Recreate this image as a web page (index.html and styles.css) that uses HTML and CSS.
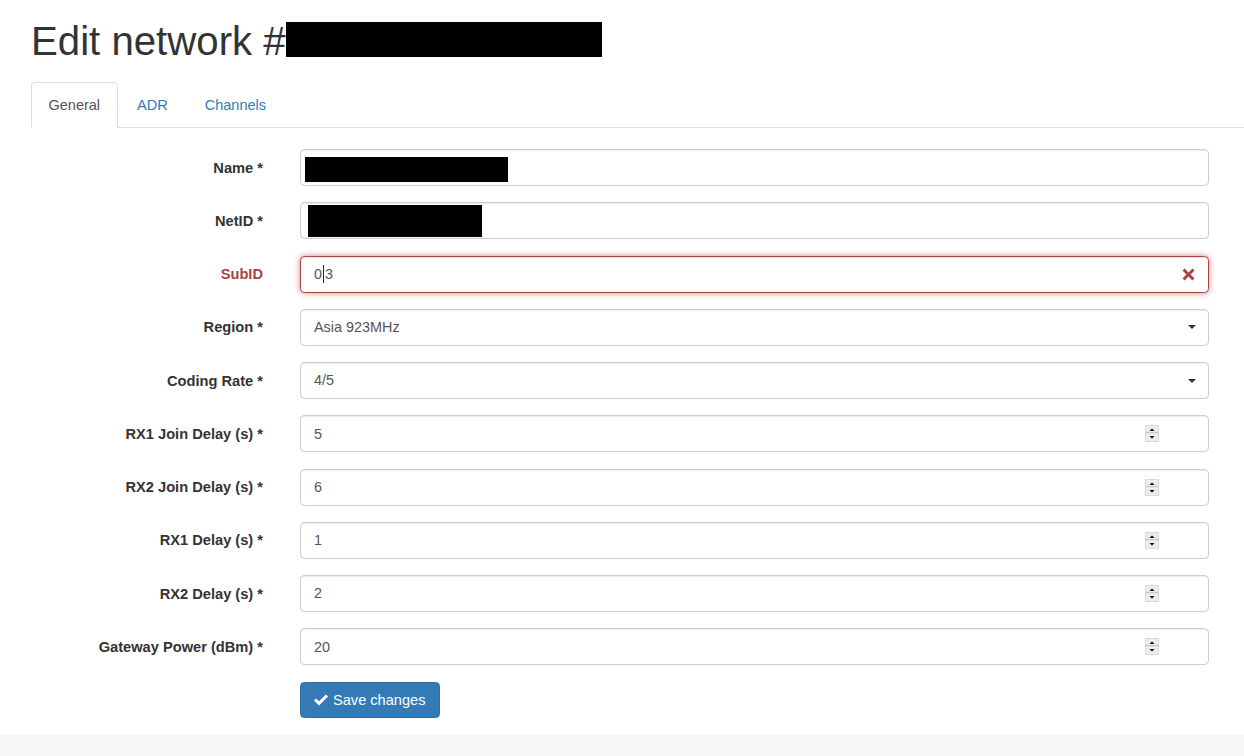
FILE: index.html
```html
<!DOCTYPE html>
<html lang="en">
<head>
<meta charset="utf-8">
<title>Edit network</title>
<link rel="stylesheet" href="styles.css">
</head>
<body>
<div class="page">
  <h1 class="title">Edit network #<span class="redact redact-title"></span></h1>

  <ul class="tabs">
    <li class="tab active"><a>General</a></li>
    <li class="tab"><a>ADR</a></li>
    <li class="tab"><a>Channels</a></li>
  </ul>

  <form class="form">
    <div class="row">
      <label class="label">Name *</label>
      <div class="control"><span class="redact redact-name"></span></div>
    </div>
    <div class="row">
      <label class="label">NetID *</label>
      <div class="control"><span class="redact redact-netid"></span></div>
    </div>
    <div class="row error">
      <label class="label">SubID</label>
      <div class="control">0<span class="cursor"></span>3
        <svg class="icon-remove" width="13" height="13" viewBox="0 0 13 13"><path d="M0.5 2.6 L2.6 0.5 L6.5 4.4 L10.4 0.5 L12.5 2.6 L8.6 6.5 L12.5 10.4 L10.4 12.5 L6.5 8.6 L2.6 12.5 L0.5 10.4 L4.4 6.5 Z" fill="#a94442"/></svg>
      </div>
    </div>
    <div class="row">
      <label class="label">Region *</label>
      <div class="control select">Asia 923MHz<span class="caret"></span></div>
    </div>
    <div class="row">
      <label class="label">Coding Rate *</label>
      <div class="control select">4/5<span class="caret"></span></div>
    </div>
    <div class="row">
      <label class="label">RX1 Join Delay (s) *</label>
      <div class="control number">5<svg class="spin" width="14" height="17" viewBox="0 0 14 17"><rect x="0.5" y="0.5" width="13" height="16" fill="#ececec" stroke="#dadada"/><line x1="1" y1="8" x2="13" y2="8" stroke="#a8a8a8"/><line x1="1" y1="9" x2="13" y2="9" stroke="#fafafa"/><path d="M4.5 6 L7 3.5 L9.5 6 Z" fill="#000"/><path d="M4.5 11 L7 13.5 L9.5 11 Z" fill="#000"/></svg></div>
    </div>
    <div class="row">
      <label class="label">RX2 Join Delay (s) *</label>
      <div class="control number">6<svg class="spin" width="14" height="17" viewBox="0 0 14 17"><rect x="0.5" y="0.5" width="13" height="16" fill="#ececec" stroke="#dadada"/><line x1="1" y1="8" x2="13" y2="8" stroke="#a8a8a8"/><line x1="1" y1="9" x2="13" y2="9" stroke="#fafafa"/><path d="M4.5 6 L7 3.5 L9.5 6 Z" fill="#000"/><path d="M4.5 11 L7 13.5 L9.5 11 Z" fill="#000"/></svg></div>
    </div>
    <div class="row">
      <label class="label">RX1 Delay (s) *</label>
      <div class="control number">1<svg class="spin" width="14" height="17" viewBox="0 0 14 17"><rect x="0.5" y="0.5" width="13" height="16" fill="#ececec" stroke="#dadada"/><line x1="1" y1="8" x2="13" y2="8" stroke="#a8a8a8"/><line x1="1" y1="9" x2="13" y2="9" stroke="#fafafa"/><path d="M4.5 6 L7 3.5 L9.5 6 Z" fill="#000"/><path d="M4.5 11 L7 13.5 L9.5 11 Z" fill="#000"/></svg></div>
    </div>
    <div class="row">
      <label class="label">RX2 Delay (s) *</label>
      <div class="control number">2<svg class="spin" width="14" height="17" viewBox="0 0 14 17"><rect x="0.5" y="0.5" width="13" height="16" fill="#ececec" stroke="#dadada"/><line x1="1" y1="8" x2="13" y2="8" stroke="#a8a8a8"/><line x1="1" y1="9" x2="13" y2="9" stroke="#fafafa"/><path d="M4.5 6 L7 3.5 L9.5 6 Z" fill="#000"/><path d="M4.5 11 L7 13.5 L9.5 11 Z" fill="#000"/></svg></div>
    </div>
    <div class="row">
      <label class="label">Gateway Power (dBm) *</label>
      <div class="control number">20<svg class="spin" width="14" height="17" viewBox="0 0 14 17"><rect x="0.5" y="0.5" width="13" height="16" fill="#ececec" stroke="#dadada"/><line x1="1" y1="8" x2="13" y2="8" stroke="#a8a8a8"/><line x1="1" y1="9" x2="13" y2="9" stroke="#fafafa"/><path d="M4.5 6 L7 3.5 L9.5 6 Z" fill="#000"/><path d="M4.5 11 L7 13.5 L9.5 11 Z" fill="#000"/></svg></div>
    </div>
    <div class="row row-actions">
      <span></span>
      <div class="actions">
        <button type="button" class="btn"><svg class="icon-ok" width="14" height="12" viewBox="0 0 14 12"><path d="M0 6.6 L2.2 4.4 L5 7.2 L11.8 0.4 L14 2.6 L5 11.6 Z" fill="#fff"/></svg>Save changes</button>
      </div>
    </div>
  </form>
</div>
<div class="footer"></div>
</body>
</html>
```

FILE: styles.css
```css
html, body {
  margin: 0;
  padding: 0;
  background: #fff;
}
body {
  font-family: "Liberation Sans", Arial, sans-serif;
  font-size: 14.6px;
  color: #333;
  line-height: 1.43;
}
.page {
  padding-left: 31px;
  padding-top: 20px;
}
.title {
  margin: 0 0 18px 0;
  font-size: 40.2px;
  font-weight: normal;
  line-height: 43.6px;
  color: #333;
  display: flex;
  align-items: center;
  height: 43.6px;
}
.redact {
  display: inline-block;
  background: #000;
}
.redact-title {
  width: 316px;
  height: 35px;
  margin-top: -4px;
}
.tabs {
  list-style: none;
  margin: 0;
  padding: 0;
  display: flex;
  border-bottom: 1px solid #ddd;
  height: 45px;
}
.tab {
  margin-right: 2px;
  margin-bottom: -1px;
}
.tab a {
  display: block;
  padding: 11px 16.5px;
  line-height: 22px;
  border: 1px solid transparent;
  border-radius: 4.4px 4.4px 0 0;
  color: #337ab7;
  font-size: 14.5px;
}
.tab.active a {
  color: #555;
  background: #fff;
  border-color: #ddd #ddd transparent #ddd;
}
.form {
  padding-top: 21.5px;
  display: flex;
  flex-direction: column;
}
.row {
  display: grid;
  grid-template-columns: 232px 909px;
  column-gap: 37px;
  align-items: center;
  margin-bottom: 16.25px;
}
.row-actions {
  margin-top: 0;
  margin-bottom: 17px;
}
.label {
  text-align: right;
  font-weight: bold;
  font-size: 14.65px;
  color: #333;
  padding-top: 1px;
}
.control {
  box-sizing: border-box;
  height: 37px;
  border: 1px solid #ccc;
  border-radius: 4.4px;
  box-shadow: inset 0 1px 1px rgba(0,0,0,.075);
  padding: 0 13px;
  display: flex;
  align-items: center;
  color: #555;
  font-size: 14.4px;
  background: #fff;
}
.redact-name {
  width: 203px;
  height: 25px;
  margin-left: -9px;
  margin-top: 4px;
}
.redact-netid {
  width: 174px;
  height: 32px;
  margin-left: -6px;
}
.error .label {
  color: #a94442;
}
.error .control {
  border-color: #a94442;
  box-shadow: inset 0 1px 1px rgba(0,0,0,.075), 0 0 6px #ce8483;
}
.cursor {
  display: inline-block;
  width: 1px;
  height: 18px;
  background: #222;
  margin: 0 1px;
}
.icon-remove {
  margin-left: auto;
  margin-right: 0px;
}
.caret {
  margin-left: auto;
  width: 0;
  height: 0;
  border-left: 4px solid transparent;
  border-right: 4px solid transparent;
  border-top: 4px solid #333;
  margin-right: -1px;
}
.spin {
  margin-left: auto;
  margin-right: 36px;
  display: block;
}
.actions {
  display: flex;
}
.btn {
  box-sizing: border-box;
  height: 36px;
  padding: 0 13px;
  background: #337ab7;
  border: 1px solid #2e6da4;
  border-radius: 4.4px;
  color: #fff;
  font-family: "Liberation Sans", Arial, sans-serif;
  font-size: 14.6px;
  display: flex;
  align-items: center;
  gap: 5px;
  cursor: pointer;
}
.icon-ok {
  display: block;
}
.footer {
  margin-top: 0;
  height: 40px;
  background: #f7f7f7;
}
```
